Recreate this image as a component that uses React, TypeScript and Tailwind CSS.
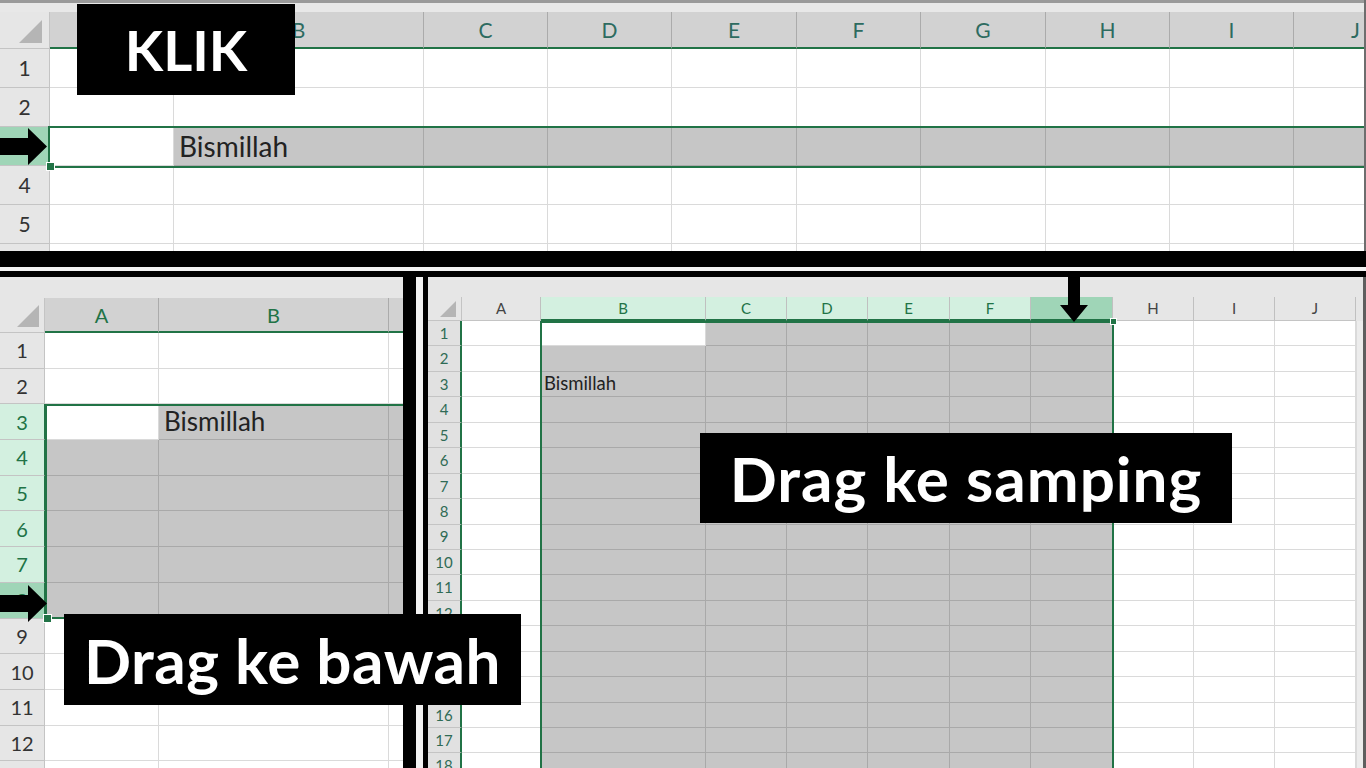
import React from "react";

type Col = [string, string];

// column letters + widths for the three excel captures
const topCols: Col[] = [
  ["A", "w-[124px]"],
  ["B", "w-[250px]"],
  ["C", "w-[124px]"],
  ["D", "w-[124px]"],
  ["E", "w-[125px]"],
  ["F", "w-[124px]"],
  ["G", "w-[125px]"],
  ["H", "w-[124px]"],
  ["I", "w-[124px]"],
  ["J", "w-[124px]"],
];

const leftCols: Col[] = [
  ["A", "w-[114px]"],
  ["B", "w-[230px]"],
  ["C", "w-[114px]"],
];

const rightCols: Col[] = [
  ["A", "w-[79px]"],
  ["B", "w-[165px]"],
  ["C", "w-[81px]"],
  ["D", "w-[81px]"],
  ["E", "w-[82px]"],
  ["F", "w-[81px]"],
  ["G", "w-[82px]"],
  ["H", "w-[81px]"],
  ["I", "w-[81px]"],
  ["J", "w-[81px]"],
];

function Corner({ className }: { className: string }) {
  return (
    <svg className={className} viewBox="0 0 10 10">
      <polygon points="10,0 10,10 0,10" fill="#b5b5b5" />
    </svg>
  );
}

function ArrowRight({ className }: { className: string }) {
  return (
    <svg className={className} viewBox="0 0 47 37">
      <polygon points="0,10 28,10 28,0 47,18.5 28,37 28,27 0,27" fill="#000" />
    </svg>
  );
}

function ArrowDown({ className }: { className: string }) {
  return (
    <svg className={className} viewBox="0 0 28 48">
      <polygon points="8,0 20,0 20,31 28,31 14,48 0,31 8,31" fill="#000" />
    </svg>
  );
}

function Label({ text, className }: { text: string; className: string }) {
  return (
    <div
      className={`absolute flex items-center justify-center bg-black font-bold leading-none text-white ${className}`}
    >
      {text}
    </div>
  );
}

function TopSheet() {
  return (
    <div className="relative h-[251px] shrink-0 overflow-hidden bg-white">
      <div className="h-[12px] border-t-[3px] border-[#9a9a9a] bg-[#e8e8e8]" />
      <div className="flex h-[37px]">
        <div className="flex w-[50px] shrink-0 items-end justify-end border-r border-b border-[#c4c4c4] bg-[#e6e6e6] pr-[7px] pb-[5px]">
          <Corner className="h-[23px] w-[23px]" />
        </div>
        {topCols.map(([l, w]) => (
          <div
            key={l}
            className={`${w} flex shrink-0 items-center justify-center border-r border-b-2 border-[#ababab] border-b-[#217346] bg-[#d2d2d2] text-[21px] text-[#2d6b60]`}
          >
            {l}
          </div>
        ))}
      </div>
      {[1, 2, 3, 4, 5, 6].map((r) => (
        <div key={r} className="flex h-[39px]">
          <div
            className={`flex w-[50px] shrink-0 items-center justify-center border-r border-b border-[#c4c4c4] text-[21px] ${
              r === 3 ? "bg-[#9fd5b7] text-[#217346]" : "bg-[#e6e6e6] text-[#333]"
            }`}
          >
            {r}
          </div>
          {topCols.map(([l, w], i) => {
            const sel = r === 3 && i > 0;
            return (
              <div
                key={l}
                className={`${w} flex shrink-0 items-center border-r border-b px-[5px] text-[28px] text-[#222] ${
                  sel ? "border-[#a9a9a9] bg-[#c6c6c6]" : "border-[#dadada] bg-white"
                }`}
              >
                {r === 3 && l === "B" ? "Bismillah" : ""}
              </div>
            );
          })}
        </div>
      ))}
      {/* selected row 3 */}
      <div className="absolute left-[48px] top-[126px] h-[42px] w-[1330px] border-2 border-[#217346]" />
      <div className="absolute left-[46px] top-[162px] h-[9px] w-[9px] border border-white bg-[#217346]" />
      <div className="absolute right-0 top-0 h-full w-[2px] bg-[#6e6e6e]" />
    </div>
  );
}

function LeftSheet() {
  const rows = [1, 2, 3, 4, 5, 6, 7, 8, 9, 10, 11, 12, 13];
  return (
    <div className="relative w-[403px] shrink-0 overflow-hidden bg-white">
      <div className="h-[21px] bg-[#e6e6e6]" />
      <div className="flex h-[35px]">
        <div className="flex w-[45px] shrink-0 items-end justify-end border-r border-b border-[#c4c4c4] bg-[#e6e6e6] pr-[5px] pb-[5px]">
          <Corner className="h-[22px] w-[22px]" />
        </div>
        {leftCols.map(([l, w]) => (
          <div
            key={l}
            className={`${w} flex shrink-0 items-center justify-center border-r border-b-2 border-[#ababab] border-b-[#217346] bg-[#d2d2d2] text-[20px] text-[#217346]`}
          >
            {l}
          </div>
        ))}
      </div>
      {rows.map((r) => {
        const inSel = r >= 3 && r <= 8;
        const head =
          r === 8
            ? "bg-[#9fd5b7] text-[#217346] border-r-[#217346]"
            : inSel
              ? "bg-[#d3f0e0] text-[#217346] border-r-[#217346]"
              : "bg-[#e6e6e6] text-[#333]";
        return (
          <div key={r} className="flex h-[35.7px]">
            <div
              className={`flex w-[45px] shrink-0 items-center justify-center border-r border-b border-[#c4c4c4] text-[20px] ${head}`}
            >
              {r}
            </div>
            {leftCols.map(([l, w], i) => {
              const grey = inSel && !(r === 3 && i === 0);
              return (
                <div
                  key={l}
                  className={`${w} flex shrink-0 items-center border-r border-b px-[5px] text-[26px] text-[#222] ${
                    grey ? "border-[#a9a9a9] bg-[#c6c6c6]" : "border-[#dadada] bg-white"
                  }`}
                >
                  {r === 3 && l === "B" ? "Bismillah" : ""}
                </div>
              );
            })}
          </div>
        );
      })}
      {/* A3:C8 selection */}
      <div className="absolute left-[45px] top-[127px] h-[215px] w-[400px] border-2 border-[#217346]" />
      <div className="absolute left-[43px] top-[337px] h-[9px] w-[9px] border border-white bg-[#217346]" />
    </div>
  );
}

function RightSheet() {
  const rows = Array.from({ length: 19 }, (_, i) => i + 1);
  const headStyle = (l: string) => {
    if (l === "G") return "bg-[#9fd5b7] text-[#217346] border-b-2 border-b-[#217346]";
    if (l === "A" || l === "H" || l === "I" || l === "J")
      return "bg-[#e6e6e6] text-[#444] border-b border-b-[#c4c4c4]";
    return "bg-[#d3f0e0] text-[#217346] border-b-2 border-b-[#217346]";
  };
  return (
    <div className="relative flex-1 overflow-hidden bg-white">
      <div className="h-[20px] bg-[#e6e6e6]" />
      <div className="flex h-[24px]">
        <div className="flex w-[34px] shrink-0 items-end justify-end border-r border-b border-[#c4c4c4] bg-[#e6e6e6] pr-[5px] pb-[3px]">
          <Corner className="h-[16px] w-[16px]" />
        </div>
        {rightCols.map(([l, w]) => (
          <div
            key={l}
            className={`${w} flex shrink-0 items-center justify-center border-r border-[#c0c0c0] text-[15px] ${headStyle(l)}`}
          >
            {l}
          </div>
        ))}
        <div className="w-[10px] shrink-0 bg-[#e6e6e6]" />
      </div>
      {rows.map((r) => (
        <div key={r} className="flex h-[25.45px]">
          <div className="flex w-[34px] shrink-0 items-center justify-center border-r-2 border-b border-[#c4c4c4] border-r-[#217346] bg-[#e1e1e1] text-[15px] text-[#2f6b55]">
            {r}
          </div>
          {rightCols.map(([l, w]) => {
            const inSel = "BCDEFG".includes(l) && !(l === "B" && r === 1);
            return (
              <div
                key={l}
                className={`${w} flex shrink-0 items-center border-r border-b px-[3px] text-[18.5px] text-[#222] ${
                  inSel ? "border-[#a9a9a9] bg-[#c6c6c6]" : "border-[#dadada] bg-white"
                }`}
              >
                {l === "B" && r === 3 ? "Bismillah" : ""}
              </div>
            );
          })}
          <div className="w-[10px] shrink-0 border-l border-[#dadada] bg-[#ececec]" />
        </div>
      ))}
      {/* B1:G selection */}
      <div className="absolute left-[112px] top-[44px] bottom-[-10px] w-[574px] border-2 border-[#217346]" />
      <div className="absolute left-[682px] top-[41px] h-[7px] w-[7px] border border-white bg-[#217346]" />
      <div className="absolute right-0 top-0 h-full w-[3px] bg-[#5e5e5e]" />
    </div>
  );
}

export default function App() {
  return (
    <div className="relative h-[768px] w-[1366px] overflow-hidden bg-white font-['Lato',sans-serif]">
      <div className="flex h-full flex-col">
        <TopSheet />
        <div className="h-[16px] shrink-0 bg-black" />
        <div className="h-[4px] shrink-0 bg-[#f4f4f4]" />
        <div className="h-[6px] shrink-0 bg-black" />
        <div className="flex min-h-0 flex-1">
          <LeftSheet />
          <div className="w-[13px] shrink-0 bg-black" />
          <div className="w-[7px] shrink-0 bg-[#f2f2f2]" />
          <div className="w-[5px] shrink-0 bg-black" />
          <RightSheet />
        </div>
      </div>

      {/* arrows */}
      <ArrowRight className="absolute left-0 top-[128px] h-[37px] w-[47px]" />
      <ArrowRight className="absolute left-0 top-[585px] h-[37px] w-[47px]" />
      <ArrowDown className="absolute left-[1060px] top-[274px] h-[48px] w-[28px]" />

      {/* captions */}
      <Label text="KLIK" className="left-[77px] top-[4px] h-[91px] w-[218px] text-[56px]" />
      <Label
        text="Drag ke bawah"
        className="left-[64px] top-[614px] h-[91px] w-[457px] text-[62px] tracking-[0.5px]"
      />
      <Label
        text="Drag ke samping"
        className="left-[700px] top-[433px] h-[90px] w-[532px] text-[62px] tracking-[1px]"
      />
    </div>
  );
}
